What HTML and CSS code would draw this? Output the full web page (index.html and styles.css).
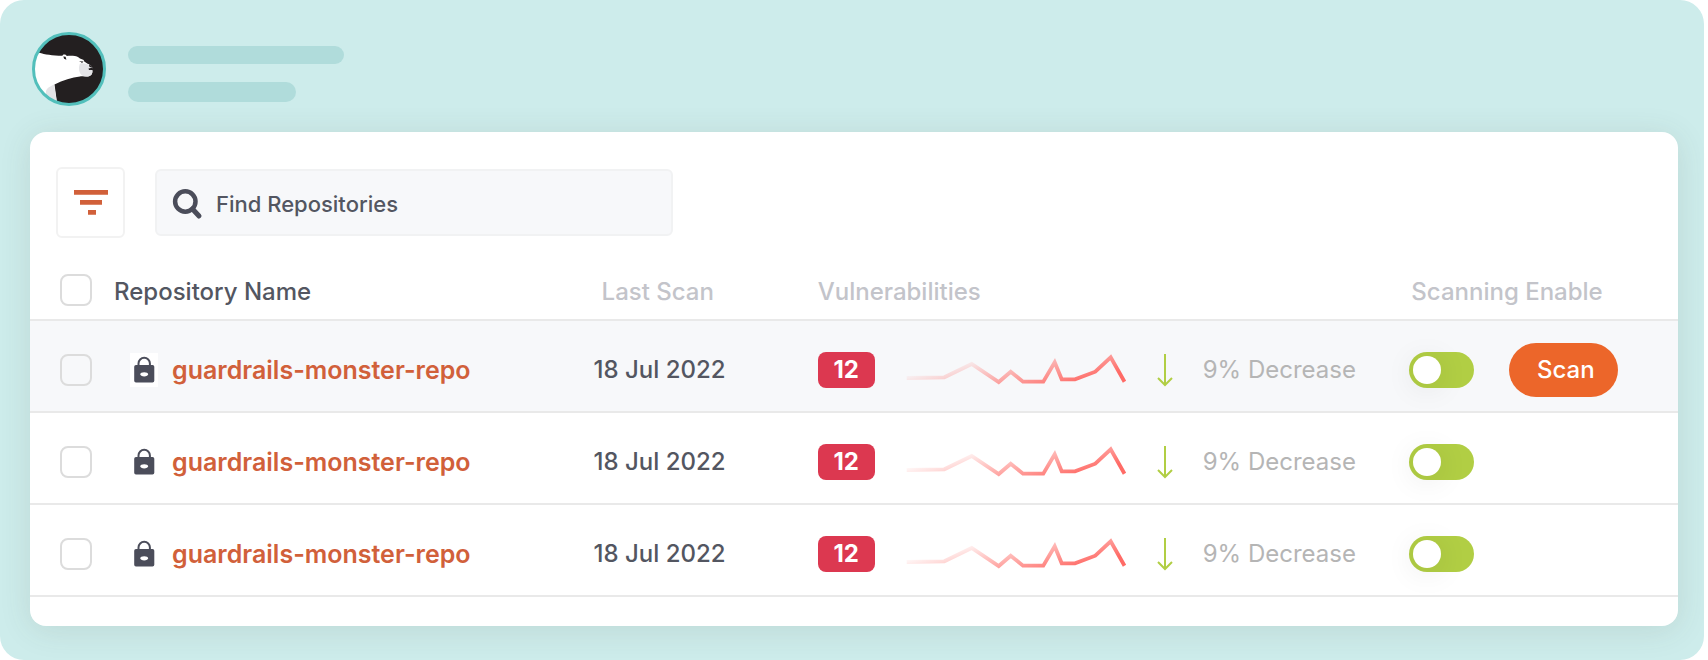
FILE: index.html
```
<!DOCTYPE html>
<html lang="en">
<head>
<meta charset="utf-8">
<title>Repositories</title>
<link rel="stylesheet" href="styles.css">
</head>
<body>
<svg class="defs" width="0" height="0" aria-hidden="true">
  <defs>
    <linearGradient id="trend" gradientUnits="userSpaceOnUse" x1="5.5" y1="20" x2="20" y2="73">
      <stop offset="0" stop-color="#ff6b66" stop-opacity="0"/>
      <stop offset="1" stop-color="#ff6b66"/>
    </linearGradient>
    <symbol id="lock" viewBox="0 0 28 34">
      <path d="M8.5 13V10.500a5.700 5.700 0 0 1 11.400 0V13" fill="none" stroke="#4b4d5a" stroke-width="2"/>
      <path fill-rule="evenodd" fill="#4b4d5a" d="M6 12h16.500a1.800 1.800 0 0 1 1.800 1.800v14a1.800 1.800 0 0 1-1.800 1.800H6a1.800 1.800 0 0 1-1.800-1.800v-14A1.800 1.800 0 0 1 6 12zM14.200 19.200c-2.200 0-4 .9-4 2.100s1.800 2.100 4 2.100 4-.9 4-2.100-1.800-2.100-4-2.100z"/>
    </symbol>
    <symbol id="spark" viewBox="0 0 222 36">
      <polyline fill="none" stroke="url(#trend)" stroke-width="3.800" points="0.7,26 38.3,25.3 65.7,12 92.700,30 104.700,19.700 117,29.700 137.300,29.700 148.700,10.300 155.700,27.300 169,27.300 189.300,19.700 204.700,5.300 218.500,29.700"/>
    </symbol>
    <symbol id="down" viewBox="0 0 16 34">
      <path d="M8 1v31M1 25l7 7 7-7" fill="none" stroke="#b1ce44" stroke-width="2"/>
    </symbol>
  </defs>
</svg>
<main class="panel">
  <header class="profile">
    <svg class="avatar" viewBox="0 0 74 74" role="img" aria-label="Profile picture">
      <clipPath id="face"><circle cx="37" cy="37" r="35"/></clipPath>
      <g clip-path="url(#face)">
        <rect width="74" height="74" fill="#231f20"/>
        <path fill="#fff" d="M0 19.500 7 20.800C13 22.500 20 23.700 30.500 23.800c.2-1.600 3.200-1.600 4.200.2 4-.4 9-.3 12 1.400 1.600 1.500 3.600 1.600 5 2.600.2 2.500 4.800 3.700 7.400 5.700 1 .8 1.400 2 1 2.700l-3.200 1.200 3.500.7c.3 2.800-.7 5.200-3.400 6-3 .6-6-.3-9 .1C40 45.500 31 48 22.500 52.500L25.500 74H0z"/>
        <path fill="#e4e4e7" d="M48 31.500c3-.8 8 .3 10.500 2.200 1 .8 1.900 2 1.600 2.700l-3.200 1.200 3.500.7c.3 2.800-.7 5.200-3.400 6-3 .8-6 .1-8-1.900-2.500-3-2.400-8-1-10.900z"/>
        <path fill="#e4e4e7" d="M22 52.500c-5 2.500-8.500 4-8 9L15.500 74h10z"/>
        <path fill="#231f20" d="M56.500 36.500l3.500-.8.800 2-3.800.2zM57 32.500l2.800 1.500.2 1.500-2.500-.5zM31.300 24.500l2.300.2.800 3-2.300-1zM47 29.200l4.500.2-1.500 1.500-1.200-.8z"/>
      </g>
      <circle cx="37" cy="37" r="35.500" fill="none" stroke="#52bfbb" stroke-width="3"/>
    </svg>
    <div class="lines">
      <div class="line line-name"></div>
      <div class="line line-detail"></div>
    </div>
  </header>
  <section class="card">
    <form class="toolbar">
      <button class="filter" type="button" aria-label="Filter">
        <svg width="35" height="26" viewBox="0 0 35 26" fill="#d1603a"><path d="M1 0h34v4.800H1zM7 10h22v4.800H7zM15 20h8v4.800h-8z"/></svg>
      </button>
      <label class="search">
        <svg width="32" height="32" viewBox="0 0 32 32" fill="none" stroke="#4b4d5a"><circle cx="13.300" cy="13.500" r="10.200" stroke-width="4.500"/><path d="M20.500 21l6.500 7" stroke-width="5" stroke-linecap="round"/></svg>
        <input class="search-input" type="text" placeholder="Find Repositories" aria-label="Find Repositories">
      </label>
    </form>
    <table class="repos">
      <colgroup><col class="col-check"><col class="col-name"><col class="col-date"><col class="col-vuln"><col></colgroup>
      <thead>
        <tr>
          <th class="pick"><input class="check" type="checkbox" aria-label="Select all repositories"></th>
          <th class="title">Repository Name</th>
          <th class="date-title">Last Scan</th>
          <th>Vulnerabilities</th>
          <th class="enable-title">Scanning Enable</th>
        </tr>
      </thead>
      <tbody>
        <tr class="active">
          <td class="pick"><input class="check" type="checkbox" aria-label="Select guardrails-monster-repo"></td>
          <td><div class="repo"><svg class="lock"><use href="#lock"/></svg><a class="link" href="#">guardrails-monster-repo</a></div></td>
          <td>18 Jul 2022</td>
          <td><div class="vuln"><span class="badge">12</span><svg class="spark"><use href="#spark"/></svg><svg class="down"><use href="#down"/></svg><span class="change">9% Decrease</span></div></td>
          <td><div class="actions"><input class="toggle" type="checkbox" role="switch" aria-label="Scanning Enable"><button class="scan" type="button">Scan</button></div></td>
        </tr>
        <tr>
          <td class="pick"><input class="check" type="checkbox" aria-label="Select guardrails-monster-repo"></td>
          <td><div class="repo"><svg class="lock"><use href="#lock"/></svg><a class="link" href="#">guardrails-monster-repo</a></div></td>
          <td>18 Jul 2022</td>
          <td><div class="vuln"><span class="badge">12</span><svg class="spark"><use href="#spark"/></svg><svg class="down"><use href="#down"/></svg><span class="change">9% Decrease</span></div></td>
          <td><div class="actions"><input class="toggle" type="checkbox" role="switch" aria-label="Scanning Enable"></div></td>
        </tr>
        <tr>
          <td class="pick"><input class="check" type="checkbox" aria-label="Select guardrails-monster-repo"></td>
          <td><div class="repo"><svg class="lock"><use href="#lock"/></svg><a class="link" href="#">guardrails-monster-repo</a></div></td>
          <td>18 Jul 2022</td>
          <td><div class="vuln"><span class="badge">12</span><svg class="spark"><use href="#spark"/></svg><svg class="down"><use href="#down"/></svg><span class="change">9% Decrease</span></div></td>
          <td><div class="actions"><input class="toggle" type="checkbox" role="switch" aria-label="Scanning Enable"></div></td>
        </tr>
      </tbody>
    </table>
  </section>
</main>
</body>
</html>
```
FILE: styles.css
```
* { box-sizing: border-box; }
body {
  margin: 0;
  background: #fff;
  color: #535661;
  font: 500 24px/32px Inter, "Liberation Sans", sans-serif;
}
.defs { display: block; }
.panel {
  margin-right: 4px;
  padding: 32px 26px 34px 30px;
  border-radius: 24px;
  background: #cdeceb;
}
.profile {
  display: flex;
  gap: 22px;
  padding-left: 2px;
  margin-bottom: 26px;
}
.avatar { display: block; width: 74px; height: 74px; }
.lines { display: flex; flex-direction: column; gap: 18px; padding-top: 14px; }
.line { border-radius: 10px; background: #b0dcdb; }
.line-name { width: 216px; height: 18px; }
.line-detail { width: 168px; height: 20px; }
.card {
  padding: 35px 0 29px;
  border-radius: 16px;
  background: #fff;
  box-shadow: 0 4px 32px rgba(70, 70, 60, 0.12);
}
.toolbar {
  display: flex;
  align-items: center;
  gap: 30px;
  padding: 0 26px 23px;
}
.filter {
  display: flex;
  align-items: center;
  justify-content: center;
  width: 69px;
  height: 71px;
  padding: 0;
  border: 2px solid #f2f2f2;
  border-radius: 6px;
  background: #fff;
}
.search {
  display: flex;
  align-items: center;
  gap: 12px;
  width: 518px;
  height: 67px;
  padding: 2px 15px 0;
  border: 2px solid #f1f2f3;
  border-radius: 6px;
  background: #f7f8fa;
}
.search-input {
  flex: 1;
  min-width: 0;
  padding: 0;
  border: 0;
  outline: 0;
  background: none;
  font: 500 22px/32px Inter, "Liberation Sans", sans-serif;
  color: #535661;
}
.search-input::placeholder { color: #535661; opacity: 1; }
.repos {
  width: 100%;
  table-layout: fixed;
  border-spacing: 0;
}
.col-check { width: 84px; }
.col-name { width: 29.1%; }
.col-date { width: 13.6%; }
.col-vuln { width: 35.9%; }
th, td {
  padding: 0;
  border-bottom: 2px solid #e9e9e9;
  text-align: left;
  vertical-align: middle;
  white-space: nowrap;
}
th { height: 60px; padding-top: 4px; font-weight: 500; color: #c3c4ca; }
th.title { color: #535661; }
th.date-title { padding-left: 8px; }
th.enable-title { padding-left: 2px; font-weight: 500; }
td { height: 92px; padding-top: 8px; }
.active td { background: #f7f8fa; }
th.pick { padding-top: 0; }
th.pick, td.pick { padding-left: 30px; }
.check {
  display: block;
  appearance: none;
  width: 32px;
  height: 32px;
  margin: 0;
  border: 2px solid #dcdcdc;
  border-radius: 8px;
}
.repo { display: flex; align-items: center; gap: 14px; padding-left: 16px; }
.lock { width: 28px; height: 34px; background: #fff; }
.link { color: #d1603a; font-size: 25px; font-weight: 600; text-decoration: none; }
.vuln { display: flex; align-items: center; }
.badge {
  width: 57px;
  height: 36px;
  border-radius: 8px;
  background: #dc3850;
  color: #fff;
  font-weight: 700;
  line-height: 36px;
  text-align: center;
}
.spark { width: 222px; height: 36px; margin: 0 29px 0 31px; }
.down { width: 16px; height: 34px; margin-right: 30px; }
.change { color: #b5b5b5; font-weight: 400; }
.actions { display: flex; align-items: center; gap: 35px; }
.toggle {
  appearance: none;
  display: flex;
  align-items: center;
  width: 65px;
  height: 36px;
  margin: 0;
  padding: 0 4px;
  border-radius: 18px;
  background: #b1ce44;
}
.toggle::before {
  content: "";
  width: 28px;
  height: 28px;
  border-radius: 50%;
  background: #fff;
  box-shadow: 0 4px 30px rgba(0, 0, 0, 0.1);
}
.scan {
  width: 109px;
  height: 54px;
  padding: 0 0 0 4px;
  border: 0;
  border-radius: 27px;
  background: #ec662a;
  color: #fff;
  font: 500 24px/32px Inter, "Liberation Sans", sans-serif;
}
```
